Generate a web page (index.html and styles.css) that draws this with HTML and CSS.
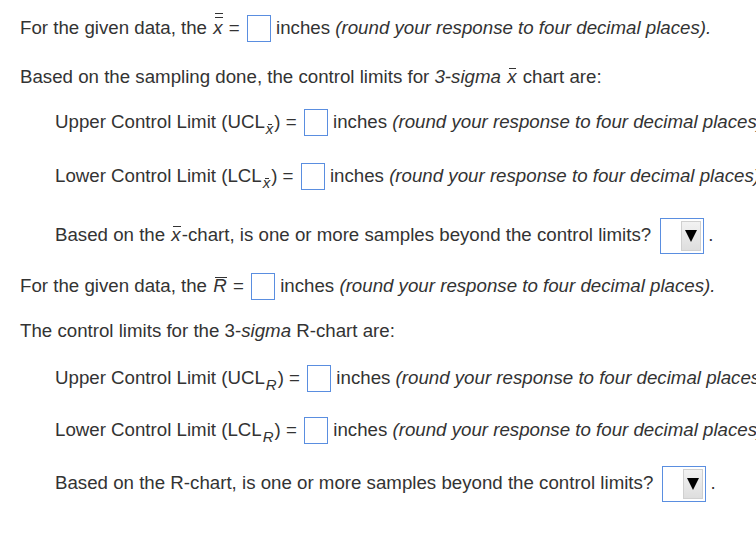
FILE: index.html
```html
<!DOCTYPE html>
<html>
<head>
<meta charset="utf-8">
<link rel="stylesheet" href="styles.css">
</head>
<body>
<div class="page">
  <p class="row r1">For the given data, the <span class="var dbl">x</span> = <span class="box"></span> inches <em>(round your response to four decimal places).</em></p>
  <p class="row r2">Based on the sampling done, the control limits for <em>3-sigma</em> <span class="var bar">x</span> chart are:</p>
  <p class="row ind r3">Upper Control Limit (UCL<span class="sub"><span class="var bar">x</span></span>) = <span class="box"></span> inches <em>(round your response to four decimal places).</em></p>
  <p class="row ind r4">Lower Control Limit (LCL<span class="sub"><span class="var bar">x</span></span>) = <span class="box"></span> inches <em>(round your response to four decimal places).</em></p>
  <p class="row ind r5">Based on the <span class="var bar">x</span>-chart, is one or more samples beyond the control limits? <span class="select"><span class="btn"><span class="tri"></span></span></span><span class="dot">.</span></p>
  <p class="row r6">For the given data, the <span class="var bar">R</span> = <span class="box"></span> inches <em>(round your response to four decimal places).</em></p>
  <p class="row r7">The control limits for the 3-<em>sigma</em> R-chart are:</p>
  <p class="row ind r8">Upper Control Limit (UCL<span class="sub"><span class="var">R</span></span>) = <span class="box"></span> inches <em>(round your response to four decimal places).</em></p>
  <p class="row ind r9">Lower Control Limit (LCL<span class="sub"><span class="var">R</span></span>) = <span class="box"></span> inches <em>(round your response to four decimal places).</em></p>
  <p class="row ind r10">Based on the R-chart, is one or more samples beyond the control limits? <span class="select"><span class="btn"><span class="tri"></span></span></span><span class="dot">.</span></p>
</div>
</body>
</html>
```
FILE: styles.css
```css
html {
  overflow: hidden;
  background: #ffffff;
}
body {
  margin: 0;
  padding: 0;
  background: #ffffff;
}
.page {
  padding: 11px 0 40px 20px;
  font-family: "Liberation Sans", Arial, sans-serif;
  font-size: 18.7px;
  color: #333333;
}
.row {
  margin: 0;
  height: 34px;
  line-height: 34px;
  white-space: nowrap;
}
.ind { padding-left: 35px; }
.r2 { margin-top: 15px; }
.r3 { margin-top: 11px; }
.r4 { margin-top: 20px; }
.r5 { margin-top: 25px; }
.r6 { margin-top: 17px; }
.r7 { margin-top: 11px; }
.r8 { margin-top: 13px; }
.r9 { margin-top: 18px; }
.r10 { margin-top: 19px; }
em { font-style: italic; }
.var {
  font-style: italic;
  position: relative;
  display: inline-block;
  line-height: 1;
  margin: 0 1px;
}
.var.bar::before {
  content: "";
  position: absolute;
  left: 2px;
  right: 0;
  top: 0px;
  height: 1px;
  background: #333;
}
.var.dbl::before {
  content: "";
  position: absolute;
  left: 2px;
  right: 0;
  top: -6px;
  height: 5px;
  border-top: 1px solid #333;
  border-bottom: 1px solid #333;
  box-sizing: border-box;
}
.sub {
  font-size: 15px;
  position: relative;
  top: 6px;
  padding: 0 1px;
}
.sub .var { margin: 0; }
.sub .var.bar::before { top: 3px; left: 2px; right: 1px; }
.box {
  display: inline-block;
  vertical-align: middle;
  width: 22px;
  height: 25px;
  border: 1px solid #5a8ee0;
  background: #fff;
  position: relative;
  top: -1px;
  margin-left: 2px;
}
.select {
  display: inline-block;
  vertical-align: middle;
  width: 44px;
  height: 36px;
  border: 1px solid #5a8ee0;
  box-sizing: border-box;
  padding: 2px 2px 2px 20px;
  background: #fff;
  margin-left: 4px;
  line-height: 0;
}
.btn {
  width: 20px;
  height: 30px;
  background: linear-gradient(#f2f2f2, #dedede);
  border: 1px solid #d0d0d0;
  box-sizing: border-box;
  display: flex;
  align-items: center;
  justify-content: center;
}
.tri {
  width: 0;
  height: 0;
  border-left: 6px solid transparent;
  border-right: 6px solid transparent;
  border-top: 12px solid #000;
}
.dot { margin-left: 4px; }
```
